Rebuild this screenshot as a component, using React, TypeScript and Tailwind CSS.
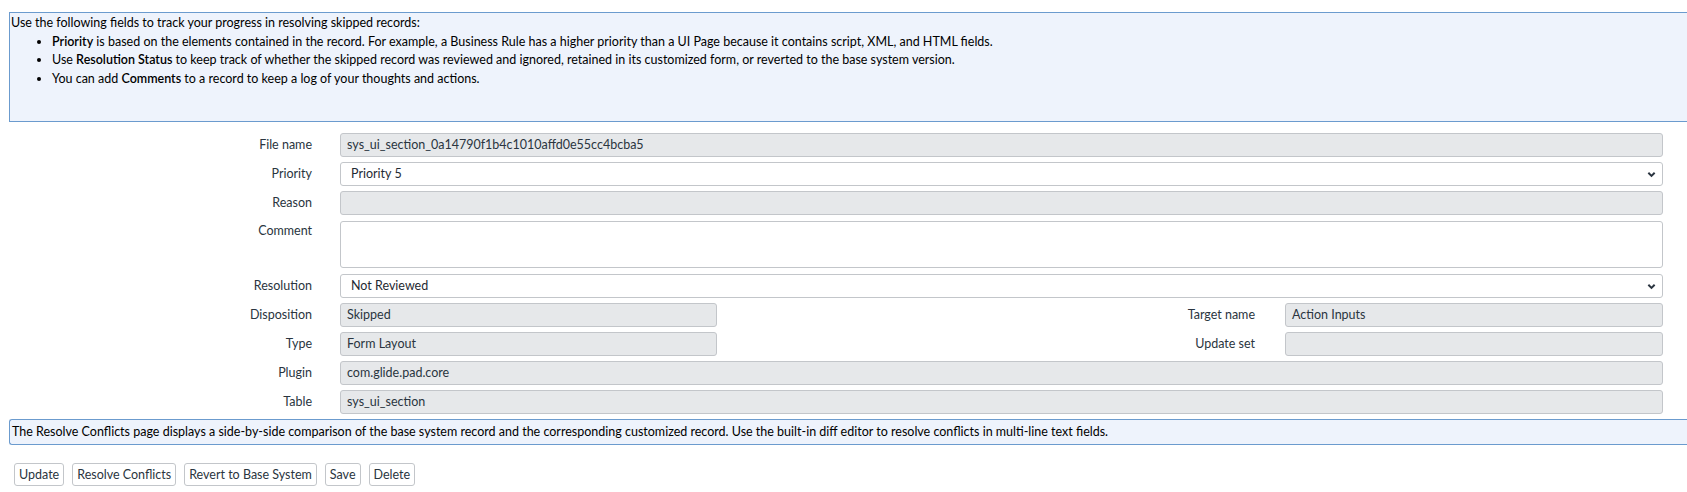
import type { ReactNode } from "react";

const FONT = "font-['Lato','Liberation_Sans',sans-serif]";

function Label({ children, className = "" }: { children: ReactNode; className?: string }) {
  return <div className={`text-right text-[12.5px] leading-[18px] text-[#2a3540] ${className}`}>{children}</div>;
}

function ReadOnly({ value = "", className = "" }: { value?: string; className?: string }) {
  return (
    <div
      className={`h-[24px] rounded-[3px] border border-[#c3c6ca] bg-[#e6e8ea] px-[6px] text-[12.5px] leading-[22px] text-[#2a3540] ${className}`}
    >
      {value}
    </div>
  );
}

function Select({ value }: { value: string }) {
  return (
    <div className="relative h-[24px] rounded-[3px] border border-[#c3c6ca] bg-white pl-[10px] text-[12.5px] leading-[22px] text-[#1f2a33]">
      {value}
      <svg
        viewBox="0 0 10 10"
        className="absolute right-[6px] top-[7px] h-[9px] w-[9px]"
        fill="none"
        stroke="#2b3540"
        strokeWidth="2.2"
      >
        <path d="M1.5 3l3.5 3.5L8.5 3" />
      </svg>
    </div>
  );
}

function Row({ label, children, top = false }: { label: string; children: ReactNode; top?: boolean }) {
  return (
    <div className={`flex ${top ? "items-start" : "items-center"}`}>
      <Label className={`w-[312px] shrink-0 ${top ? "pt-[1px]" : ""}`}>{label}</Label>
      <div className="ml-[28px] flex-1">{children}</div>
    </div>
  );
}

function HalfRow({
  left,
  leftValue,
  right,
  rightValue,
}: {
  left: string;
  leftValue: string;
  right: string;
  rightValue: string;
}) {
  return (
    <div className="flex items-center">
      <Label className="w-[312px] shrink-0">{left}</Label>
      <ReadOnly value={leftValue} className="ml-[28px] w-[377px] shrink-0" />
      <Label className="flex-1">{right}</Label>
      <ReadOnly value={rightValue} className="ml-[30px] w-[378px] shrink-0" />
    </div>
  );
}

const BUTTONS = ["Update", "Resolve Conflicts", "Revert to Base System", "Save", "Delete"];

export default function App() {
  return (
    <div className={`min-h-[492px] overflow-hidden bg-white pt-[12px] ${FONT}`}>
      <div className="ml-[9px] h-[110px] border border-r-0 border-[#6b9bce] bg-[#eef3fc] pl-[1px] pt-[1px] text-[12.5px] leading-[18.5px] text-black">
        <p>Use the following fields to track your progress in resolving skipped records:</p>
        <ul className="list-disc pl-[41px]">
          <li>
            <b className="font-semibold">Priority</b> is based on the elements contained in the record. For example, a
            Business Rule has a higher priority than a UI Page because it contains script, XML, and HTML fields.
          </li>
          <li>
            Use <b className="font-semibold">Resolution Status</b> to keep track of whether the skipped record was
            reviewed and ignored, retained in its customized form, or reverted to the base system version.
          </li>
          <li>
            You can add <b className="font-semibold">Comments</b> to a record to keep a log of your thoughts and
            actions.
          </li>
        </ul>
      </div>

      <div className="mt-[11px] flex w-[1663px] flex-col gap-[5px]">
        <Row label="File name">
          <ReadOnly value="sys_ui_section_0a14790f1b4c1010affd0e55cc4bcba5" />
        </Row>
        <Row label="Priority">
          <Select value="Priority 5" />
        </Row>
        <Row label="Reason">
          <ReadOnly />
        </Row>
        <div className="py-[1px]">
          <Row label="Comment" top>
            <textarea className="block h-[47px] w-full resize-none rounded-[3px] border border-[#c3c6ca] bg-white" />
          </Row>
        </div>
        <Row label="Resolution">
          <Select value="Not Reviewed" />
        </Row>
        <HalfRow left="Disposition" leftValue="Skipped" right="Target name" rightValue="Action Inputs" />
        <HalfRow left="Type" leftValue="Form Layout" right="Update set" rightValue="" />
        <Row label="Plugin">
          <ReadOnly value="com.glide.pad.core" />
        </Row>
        <Row label="Table">
          <ReadOnly value="sys_ui_section" />
        </Row>
      </div>

      <div className="ml-[9px] mt-[5px] h-[26px] rounded-l-[3px] border border-r-0 border-[#6b9bce] bg-[#eef3fc] pl-[2px] text-[12.5px] leading-[24px] text-black">
        The Resolve Conflicts page displays a side-by-side comparison of the base system record and the corresponding
        customized record. Use the built-in diff editor to resolve conflicts in multi-line text fields.
      </div>

      <div className="ml-[14px] mt-[18px] flex gap-[8px]">
        {BUTTONS.map((b) => (
          <button
            key={b}
            className="h-[23px] rounded-[3px] border border-[#c3c6ca] bg-white px-[4px] text-[12.5px] leading-[21px] text-[#2a3540]"
          >
            {b}
          </button>
        ))}
      </div>
    </div>
  );
}
